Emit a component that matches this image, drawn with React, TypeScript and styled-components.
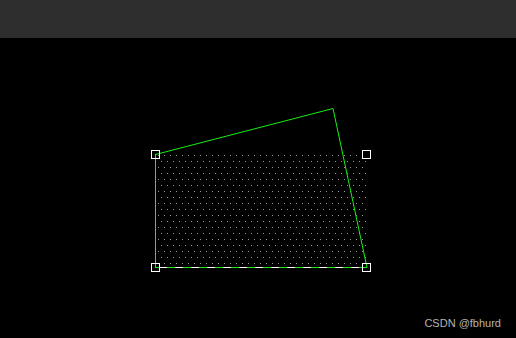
import React from 'react'
import styled, { createGlobalStyle } from 'styled-components'

const GlobalStyle = createGlobalStyle`
  html, body {
    margin: 0;
    padding: 0;
    background: #000;
  }
  #root {
    width: 516px;
    height: 338px;
  }
`

const StyledPage = styled.div`
  display: flex;
  flex-direction: column;
  width: 516px;
  height: 338px;
  background: #000;
  overflow: hidden;
`
const StyledToolbar = styled.div`
  height: 38px;
  flex-shrink: 0;
  background-color: #2e2e2e;
`
const StyledCanvas = styled.div`
  position: relative;
  flex: 1;
`
const StyledSvg = styled.svg`
  display: block;
`
const StyledWatermark = styled.span`
  position: absolute;
  right: 15px;
  bottom: 9px;
  font-family: "Liberation Sans", Arial, sans-serif;
  font-size: 11px;
  color: #b4b4b4;
`

// canvas coords are page coords minus the toolbar height
const top = 38
const rect = { x1: 155, y1: 154 - top, x2: 366, y2: 267 - top }
const poly = [
  [155.5, 154.5 - top],
  [333, 108.5 - top],
  [367, 267.5 - top],
  [155.5, 267.5 - top],
]

const toPoints = (pts: number[][]) => pts.map(p => p.join(',')).join(' ')

const Handle = ({ x, y }: { x: number, y: number }) => (
  <rect x={x - 3.5} y={y - 3.5} width={8} height={8} fill="none" stroke="#fff" strokeWidth={1} shapeRendering="crispEdges" />
)

function App() {
  return (
    <StyledPage>
      <GlobalStyle />
      <StyledToolbar />
      <StyledCanvas>
        <StyledSvg width={516} height={300} viewBox="0 0 516 300">
          <defs>
            <pattern id="dots" x={158} y={rect.y1 + 1} width={6} height={12} patternUnits="userSpaceOnUse">
              <rect x={0} y={0} width={1} height={1} fill="#9a9a9a" />
              <rect x={3} y={6} width={1} height={1} fill="#9a9a9a" />
            </pattern>
          </defs>
          {/* selection area */}
          <rect x={rect.x1 + 1} y={rect.y1 + 1} width={rect.x2 - rect.x1 + 1} height={rect.y2 - rect.y1 - 2} fill="url(#dots)" />
          <line x1={rect.x1 + 0.5} y1={rect.y1} x2={rect.x1 + 0.5} y2={rect.y2 + 1} stroke="#fff" strokeWidth={1} shapeRendering="crispEdges" />
          <line x1={rect.x1} y1={rect.y2 + 0.5} x2={rect.x2} y2={rect.y2 + 0.5} stroke="#fff" strokeWidth={1} shapeRendering="crispEdges" />
          {/* deformed outline */}
          <polyline
            points={toPoints([poly[3], poly[0], poly[1], poly[2]])}
            fill="none"
            stroke="#16f016"
            strokeWidth={1}
          />
          <polyline
            points={toPoints([poly[2], poly[3], poly[0]])}
            fill="none"
            stroke="#16f016"
            strokeWidth={1}
            strokeDasharray="8 8"
            shapeRendering="crispEdges"
          />
          <Handle x={rect.x1} y={rect.y1} />
          <Handle x={rect.x2} y={rect.y1} />
          <Handle x={rect.x1} y={rect.y2} />
          <Handle x={rect.x2} y={rect.y2} />
        </StyledSvg>
        <StyledWatermark>CSDN @fbhurd</StyledWatermark>
      </StyledCanvas>
    </StyledPage>
  )
}

export default App
